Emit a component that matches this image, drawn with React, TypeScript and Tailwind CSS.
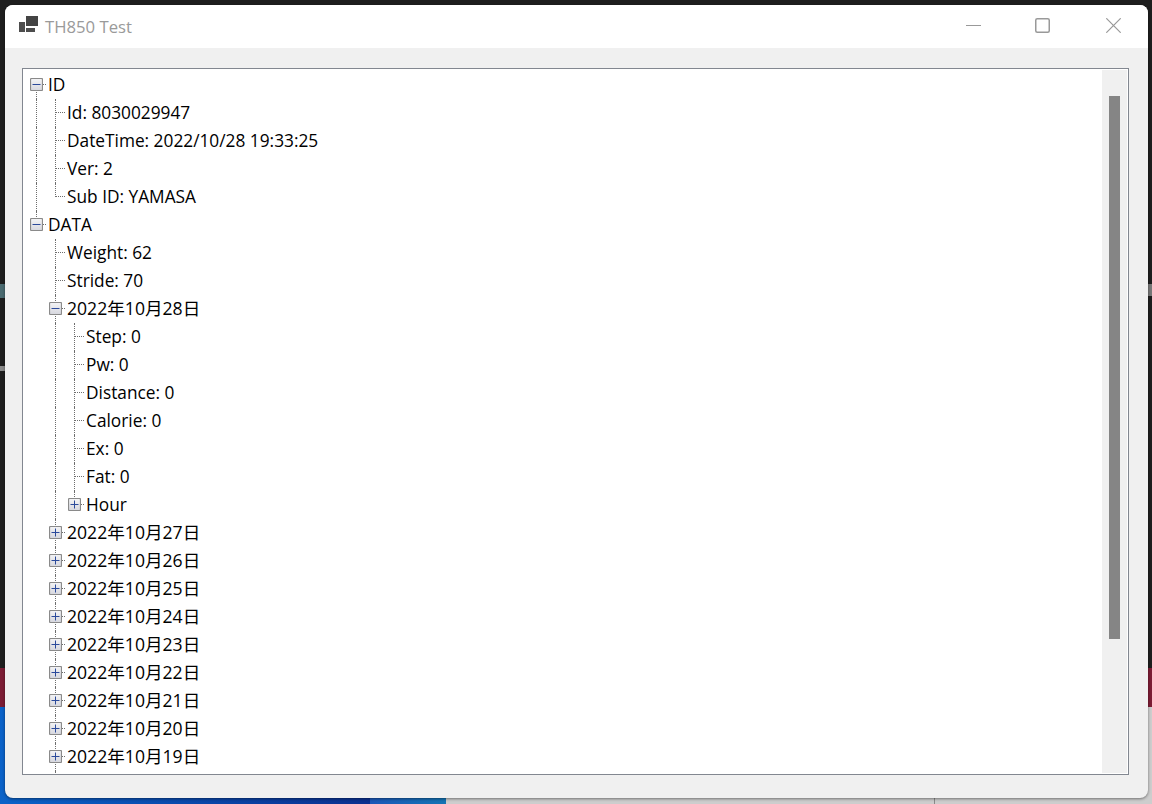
const uiFont = '"Open Sans", "Noto Sans CJK JP", sans-serif';

type Row = {
  text: string;
  depth: number;
  box?: 'minus' | 'plus';
  first?: boolean;
  last?: boolean;
  guides?: number[];
};

const rows: Row[] = [
  { text: 'ID', depth: 0, box: 'minus', first: true },
  { text: 'Id: 8030029947', depth: 1, guides: [0] },
  { text: 'DateTime: 2022/10/28 19:33:25', depth: 1, guides: [0] },
  { text: 'Ver: 2', depth: 1, guides: [0] },
  { text: 'Sub ID: YAMASA', depth: 1, last: true, guides: [0] },
  { text: 'DATA', depth: 0, box: 'minus', last: true },
  { text: 'Weight: 62', depth: 1 },
  { text: 'Stride: 70', depth: 1 },
  { text: '2022年10月28日', depth: 1, box: 'minus' },
  { text: 'Step: 0', depth: 2, guides: [1] },
  { text: 'Pw: 0', depth: 2, guides: [1] },
  { text: 'Distance: 0', depth: 2, guides: [1] },
  { text: 'Calorie: 0', depth: 2, guides: [1] },
  { text: 'Ex: 0', depth: 2, guides: [1] },
  { text: 'Fat: 0', depth: 2, guides: [1] },
  { text: 'Hour', depth: 2, box: 'plus', last: true, guides: [1] },
  { text: '2022年10月27日', depth: 1, box: 'plus' },
  { text: '2022年10月26日', depth: 1, box: 'plus' },
  { text: '2022年10月25日', depth: 1, box: 'plus' },
  { text: '2022年10月24日', depth: 1, box: 'plus' },
  { text: '2022年10月23日', depth: 1, box: 'plus' },
  { text: '2022年10月22日', depth: 1, box: 'plus' },
  { text: '2022年10月21日', depth: 1, box: 'plus' },
  { text: '2022年10月20日', depth: 1, box: 'plus' },
  { text: '2022年10月19日', depth: 1, box: 'plus' },
  // next node is scrolled out of view, only its guide line shows
  { text: '', depth: 1 },
];

function ExpandBox({ kind }: { kind: 'minus' | 'plus' }) {
  return (
    <svg className="absolute left-0 top-[7px] z-10 h-[13px] w-[13px]" viewBox="0 0 13 13" aria-hidden="true">
      <defs>
        <linearGradient id="boxFill" x1="0" y1="0" x2="0" y2="1">
          <stop offset="0" stopColor="#f4f4f6" />
          <stop offset="1" stopColor="#d6d7de" />
        </linearGradient>
      </defs>
      <rect x="0.5" y="0.5" width="12" height="12" rx="1" fill="url(#boxFill)" stroke="#8a8a8a" strokeWidth="1.2" />
      <path d="M2.5 6.5h8" stroke="#2b4a9b" />
      {kind === 'plus' && <path d="M6.5 2.5v8" stroke="#2b4a9b" />}
    </svg>
  );
}

function TreeRow({ row }: { row: Row }) {
  const guides = row.guides ?? [];
  const lineClass = row.first ? 'mt-[14px] h-[14px]' : row.last ? 'h-[14px]' : 'h-[28px]';
  const isDate = row.text.includes('年');
  return (
    <div className="flex h-[28px] shrink-0 pl-[6px]">
      {Array.from({ length: row.depth }).map((_, i) => (
        <div key={i} className="w-[19px] shrink-0 pl-[6px]">
          {guides.includes(i) && <div className="h-full border-l border-dotted border-[#6e6e6e]" />}
        </div>
      ))}
      <div className="relative flex w-[18px] shrink-0 items-start pl-[6px]">
        <div className={`shrink-0 border-l border-dotted border-[#6e6e6e] ${lineClass}`} />
        <div className="mt-[13px] w-[9px] border-t border-dotted border-[#6e6e6e]" />
        {row.box && <ExpandBox kind={row.box} />}
      </div>
      <span className={`${isDate ? 'text-[17.6px] leading-[26px]' : 'text-[17.3px] leading-[28px]'} whitespace-nowrap text-black`}>{row.text}</span>
    </div>
  );
}

function Desktop() {
  return (
    <div className="flex h-full flex-col">
      <div className="flex h-[668px] justify-between">
        <div className="flex w-[5px] flex-col gap-[68px] pt-[284px]">
          <div className="h-[14px] bg-[#4a6a70]" />
          <div className="h-[5px] bg-[#8a8a8a]" />
        </div>
        <div className="w-[4px] pt-[284px]">
          <div className="h-[12px] bg-[#777777]" />
        </div>
      </div>
      <div className="h-[39px] bg-[#7c1c34]" />
      <div className="flex flex-1">
        <div className="w-[370px] bg-gradient-to-r from-[#0a62c8] to-[#0a2f8f]" />
        <div className="flex w-[76px] flex-col justify-end bg-[#1b57b8]">
          <div className="h-[7px] bg-gradient-to-r from-[#1b57b8] to-[#1474b4]" />
        </div>
        <div className="flex flex-1 items-end bg-[#cdcdcd] pl-[488px]">
          <div className="h-[7px] w-px bg-[#8a8a8a]" />
        </div>
      </div>
    </div>
  );
}

export default function App() {
  return (
    <div className="relative h-[804px] w-[1152px] overflow-hidden bg-[#1e1e1e]" style={{ fontFamily: uiFont }}>
      <Desktop />

      {/* the app window sits on the desktop */}
      <div className="absolute left-[5px] top-[5px] flex h-[793px] w-[1143px] flex-col overflow-hidden rounded-[8px] bg-[#f0f0f0] shadow-[0_1px_3px_rgba(0,0,0,0.45)]">
        <div className="flex h-[43px] shrink-0 bg-white pl-[14px]">
          <svg className="mt-[11px] h-[17px] w-[19px] shrink-0" viewBox="0 0 19 17" aria-hidden="true">
            <rect x="0" y="6" width="6" height="10" fill="#4d4d4d" />
            <rect x="7" y="0" width="12" height="10" fill="#444444" />
            <rect x="7" y="12" width="9" height="4" fill="#4d4d4d" />
          </svg>
          <span className="ml-[7px] self-center pt-px text-[16.7px] text-[#9a9a9a]">TH850 Test</span>
          <div className="ml-auto flex h-full items-center pb-[2px] pr-[27px] text-[#999999]">
            <svg className="h-[15px] w-[15px]" viewBox="0 0 15 15" aria-hidden="true">
              <path d="M0 7.5h15" stroke="currentColor" />
            </svg>
            <svg className="ml-[54px] h-[15px] w-[15px]" viewBox="0 0 15 15" aria-hidden="true">
              <rect x="0.75" y="0.75" width="13.5" height="13.5" rx="1.5" fill="none" stroke="currentColor" strokeWidth="1.5" />
            </svg>
            <svg className="ml-[56px] h-[15px] w-[15px]" viewBox="0 0 15 15" aria-hidden="true">
              <path d="M0.3 0.3l14.4 14.4M14.7 0.3l-14.4 14.4" stroke="currentColor" strokeWidth="1.2" />
            </svg>
          </div>
        </div>

        <div className="flex min-h-0 flex-1 pb-[23px] pl-[17px] pr-[19px] pt-[20px]">
          <div className="flex min-w-0 flex-1 border border-[#828790] bg-white p-px">
            <div className="flex min-w-0 flex-1 flex-col overflow-hidden pt-px">
              {rows.map((row, i) => (
                <TreeRow key={i} row={row} />
              ))}
            </div>
            <div className="w-[25px] shrink-0 bg-[#f0f0f0] pl-[7px] pr-[7px] pt-[26px]">
              <div className="h-[543px] w-[11px] bg-[#858585]" />
            </div>
          </div>
        </div>
      </div>
    </div>
  );
}
